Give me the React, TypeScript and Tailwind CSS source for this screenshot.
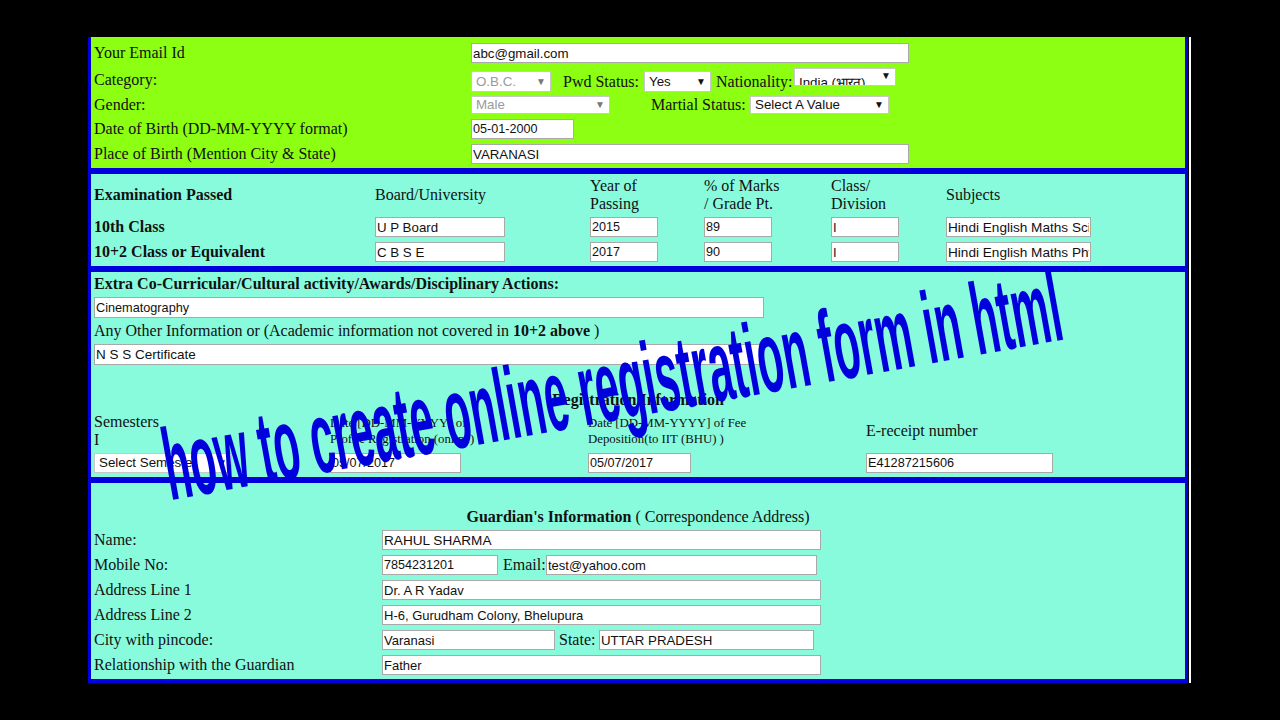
const serif = "font-['Liberation_Serif',serif]";

function Field({
  value,
  className = '',
  size = 'text-[13px]',
}: {
  value: string;
  className?: string;
  size?: string;
}) {
  return (
    <input
      readOnly
      value={value}
      className={`h-[20px] shrink-0 border border-[#a9a9a9] bg-white px-[1px] font-['Liberation_Sans',sans-serif] text-[#111] outline-none ${size} ${className}`}
    />
  );
}

function Dropdown({
  value,
  className = '',
  arrowClass = '',
  muted = false,
}: {
  value: string;
  className?: string;
  arrowClass?: string;
  muted?: boolean;
}) {
  return (
    <div
      className={`flex shrink-0 items-center justify-between overflow-hidden border border-[#c8c8c8] bg-white pl-[4px] pr-[4px] font-['Liberation_Sans',sans-serif] text-[13.33px] ${
        muted ? 'text-[#9a9a9a]' : 'text-[#111]'
      } ${className}`}
    >
      <span className="whitespace-nowrap">{value}</span>
      <span className={`text-[10px] ${muted ? 'text-[#777]' : 'text-[#111]'} ${arrowClass}`}>▼</span>
    </div>
  );
}

function PersonalRow({ label, children, className = '' }: { label: string; children: React.ReactNode; className?: string }) {
  return (
    <div className={`flex items-center ${className}`}>
      <span className="w-[377px] shrink-0">{label}</span>
      {children}
    </div>
  );
}

function GuardianRow({ label, children }: { label: string; children: React.ReactNode }) {
  return (
    <div className="flex h-[20px] items-center">
      <span className="w-[288px] shrink-0">{label}</span>
      {children}
    </div>
  );
}

const EXAM_ROWS = [
  { name: '10th Class', board: 'U P Board', year: '2015', marks: '89', division: 'I', subjects: 'Hindi English Maths Science', gap: 'mt-[4px]' },
  { name: '10+2 Class or Equivalent', board: 'C B S E', year: '2017', marks: '90', division: 'I', subjects: 'Hindi English Maths Physics', gap: 'mt-[5px]' },
];

export default function App() {
  return (
    <div className={`relative h-[720px] w-[1280px] overflow-hidden bg-black pl-[88px] pt-[37px] ${serif} text-[16px] leading-[18px] text-[#111]`}>
      <div className="flex items-stretch gap-[1px]">
        <div className="flex w-[1100px] flex-col gap-[6px] border-x-[3px] border-b-[4px] border-[#0000dc] border-t-0 bg-[#0000dc]">
          {/* Personal details */}
          <section className="h-[131px] bg-[#8cff12] pl-[3px] pt-[6px]">
            <PersonalRow label="Your Email Id" className="h-[20px]">
              <Field value="abc@gmail.com" size="text-[13.3px]" className="w-[438px]" />
            </PersonalRow>
            <PersonalRow label="Category:" className="mt-[5px] h-[24px]">
              <Dropdown value="O.B.C." muted className="mt-[3px] h-[21px] w-[80px]" />
              <span className="ml-[12px] mt-[3px] w-[81px]">Pwd Status:</span>
              <Dropdown value="Yes" className="mt-[3px] h-[21px] w-[67px]" />
              <span className="ml-[5px] mt-[3px] w-[78px]">Nationality:</span>
              <Dropdown value="India (भारत)" arrowClass="-mt-[7px]" className="mb-[6px] h-[18px] w-[102px] items-start pt-[5px]" />
            </PersonalRow>
            <PersonalRow label="Gender:" className="mt-[4px] h-[18px]">
              <Dropdown value="Male" muted className="h-[18px] w-[139px]" />
              <span className="ml-[41px] w-[99px]">Martial Status:</span>
              <Dropdown value="Select A Value" className="h-[18px] w-[139px]" />
            </PersonalRow>
            <PersonalRow label="Date of Birth (DD-MM-YYYY format)" className="mt-[5px] h-[20px]">
              <Field value="05-01-2000" size="text-[12.6px]" className="w-[103px]" />
            </PersonalRow>
            <PersonalRow label="Place of Birth (Mention City & State)" className="mt-[5px] h-[20px]">
              <Field value="VARANASI" size="text-[13.3px]" className="w-[438px]" />
            </PersonalRow>
          </section>

          {/* Examinations */}
          <section className="grid h-[92px] grid-cols-[281px_215px_114px_127px_115px_1fr] content-start items-center bg-[#88fbdd] pl-[3px] pt-[3px]">
            <b>Examination Passed</b>
            <span>Board/University</span>
            <span>Year of<br />Passing</span>
            <span>% of Marks<br />/ Grade Pt.</span>
            <span>Class/<br />Division</span>
            <span>Subjects</span>
            {EXAM_ROWS.map((row) => (
              <div key={row.name} className="contents">
                <b className={row.gap}>{row.name}</b>
                <Field value={row.board} size="text-[13.3px]" className={`w-[130px] ${row.gap}`} />
                <Field value={row.year} size="text-[12.6px]" className={`w-[68px] ${row.gap}`} />
                <Field value={row.marks} size="text-[12.6px]" className={`w-[68px] ${row.gap}`} />
                <Field value={row.division} className={`w-[68px] ${row.gap}`} />
                <Field value={row.subjects} size="text-[13.6px]" className={`w-[145px] ${row.gap}`} />
              </div>
            ))}
          </section>

          {/* Activities and registration */}
          <section className="h-[205px] bg-[#88fbdd] pl-[3px] pt-[3px]">
            <b className="block">Extra Co-Curricular/Cultural activity/Awards/Disciplinary Actions:</b>
            <Field value="Cinematography" size="text-[12.7px]" className="mt-[4px] block h-[21px] w-[670px]" />
            <p className="mt-[4px]">
              Any Other Information or (Academic information not covered in <b>10+2 above</b> )
            </p>
            <Field value="N S S Certificate" size="text-[13.5px]" className="mt-[4px] block h-[21px] w-[670px]" />
            <p className="mt-[26px] pr-[3px] text-center font-bold">Registration Information</p>
            <div className="mt-[4px] grid h-[36px] grid-cols-[236px_258px_278px_1fr] items-center">
              <span>Semesters<br />I</span>
              <span className="text-[12.8px] leading-[16px]">Date [DD-MM-YYYY] of<br />Profile Registration (online)</span>
              <span className="text-[12.8px] leading-[16px]">Date [DD-MM-YYYY] of Fee<br />Deposition(to IIT (BHU) )</span>
              <span>E-receipt number</span>
            </div>
            <div className="mt-[4px] grid grid-cols-[236px_258px_278px_1fr]">
              <Dropdown value="Select Semester" className="h-[20px] w-[138px]" />
              <Field value="05/07/2017" size="text-[12.6px]" className="w-[131px]" />
              <Field value="05/07/2017" size="text-[12.6px]" className="w-[103px]" />
              <Field value="E41287215606" size="text-[12.7px]" className="w-[187px]" />
            </div>
          </section>

          {/* Guardian */}
          <section className="flex h-[196px] flex-col gap-[5px] bg-[#88fbdd] pl-[3px] pt-[25px]">
            <p className="-mb-[1px] pr-[3px] text-center">
              <b>Guardian's Information</b> ( Correspondence Address)
            </p>
            <GuardianRow label="Name:">
              <Field value="RAHUL SHARMA" size="text-[13.6px]" className="w-[439px]" />
            </GuardianRow>
            <GuardianRow label="Mobile No:">
              <Field value="7854231201" size="text-[12.6px]" className="w-[116px]" />
              <span className="ml-[5px] w-[43px]">Email:</span>
              <Field value="test@yahoo.com" className="w-[271px]" />
            </GuardianRow>
            <GuardianRow label="Address Line 1">
              <Field value="Dr. A R Yadav" className="w-[439px]" />
            </GuardianRow>
            <GuardianRow label="Address Line 2">
              <Field value="H-6, Gurudham Colony, Bhelupura" className="w-[439px]" />
            </GuardianRow>
            <GuardianRow label="City with pincode:">
              <Field value="Varanasi" className="w-[173px]" />
              <span className="ml-[4px] w-[40px]">State:</span>
              <Field value="UTTAR PRADESH" size="text-[13.3px]" className="w-[215px]" />
            </GuardianRow>
            <GuardianRow label="Relationship with the Guardian">
              <Field value="Father" className="w-[439px]" />
            </GuardianRow>
          </section>
        </div>
        <div className="w-[2px] bg-white" />
      </div>

      {/* Video title laid over the form */}
      <span className="absolute left-[173px] top-[414px] origin-bottom-left -rotate-[10.2deg] scale-x-[0.415] whitespace-nowrap font-['Liberation_Sans',sans-serif] text-[102px] font-bold leading-[102px] text-[#0000dc]">
        how to create online registration form in html
      </span>
    </div>
  );
}
